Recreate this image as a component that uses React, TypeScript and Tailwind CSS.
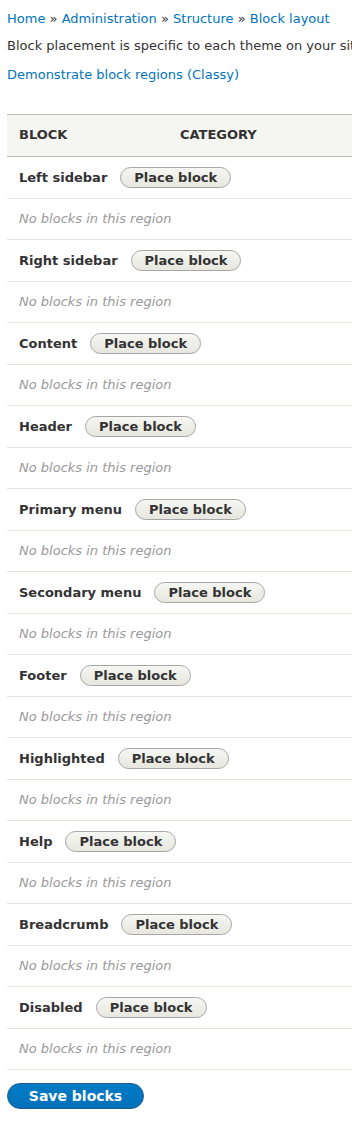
import React from 'react'

const regions = [
  'Left sidebar',
  'Right sidebar',
  'Content',
  'Header',
  'Primary menu',
  'Secondary menu',
  'Footer',
  'Highlighted',
  'Help',
  'Breadcrumb',
  'Disabled',
]

function PlaceButton() {
  return (
    <button className="ml-[13px] h-[21px] px-[13px] rounded-full border border-[#a6a6a6] bg-gradient-to-b from-[#f6f6f3] to-[#e7e7df] text-[13px] font-bold text-[#333] leading-none align-middle">
      Place block
    </button>
  )
}

export default function App() {
  return (
    <div className="w-[352px] min-h-[1121px] overflow-hidden bg-white text-[#333] text-[13px] font-['DejaVu_Sans',Verdana,sans-serif]">
      <div className="px-[7px] pt-[10px]">
        <nav className="whitespace-nowrap leading-[18px] text-[#0074bd]">
          <a>Home</a> <span className="text-[#333]">»</span> <a>Administration</a>{' '}
          <span className="text-[#333]">»</span> <a>Structure</a> <span className="text-[#333]">»</span>{' '}
          <a>Block layout</a>
        </nav>
        <p className="mt-[9px] whitespace-nowrap leading-[18px]">
          Block placement is specific to each theme on your site. Changes will not be saved until you click Save blocks at the bottom of the page.
        </p>
        <p className="mt-[11px] leading-[18px] text-[#0074bd]">
          <a>Demonstrate block regions (Classy)</a>
        </p>

        <table className="mt-[30px] w-[520px] border-collapse">
          <thead>
            <tr className="bg-[#f5f5f2] border-y border-[#bfbfba]">
              <th className="h-[42px] pb-[2px] w-[173px] pl-[12px] text-left text-[13px] font-bold uppercase text-[#333]">Block</th>
              <th className="pb-[2px] text-left text-[13px] font-bold uppercase text-[#333]">Category</th>
              <th className="pb-[2px] text-left text-[13px] font-bold uppercase text-[#333]">Region</th>
            </tr>
          </thead>
          <tbody>
            {regions.map((r) => (
              <React.Fragment key={r}>
                <tr className="border-b border-[#e6e4df]">
                  <td colSpan={3} className="h-[42px] pl-[12px] whitespace-nowrap">
                    <span className="font-bold align-middle">{r}</span>
                    <PlaceButton />
                  </td>
                </tr>
                <tr className="border-b border-[#e6e4df]">
                  <td colSpan={3} className="h-[41px] pl-[12px] italic text-[#999]">
                    No blocks in this region
                  </td>
                </tr>
              </React.Fragment>
            ))}
          </tbody>
        </table>

        <button className="mt-[13px] h-[26px] w-[137px] rounded-full border border-[#1e5c90] bg-gradient-to-b from-[#007bc6] to-[#0071b8] text-[14px] font-bold text-white leading-none">
          Save blocks
        </button>
      </div>
    </div>
  )
}
